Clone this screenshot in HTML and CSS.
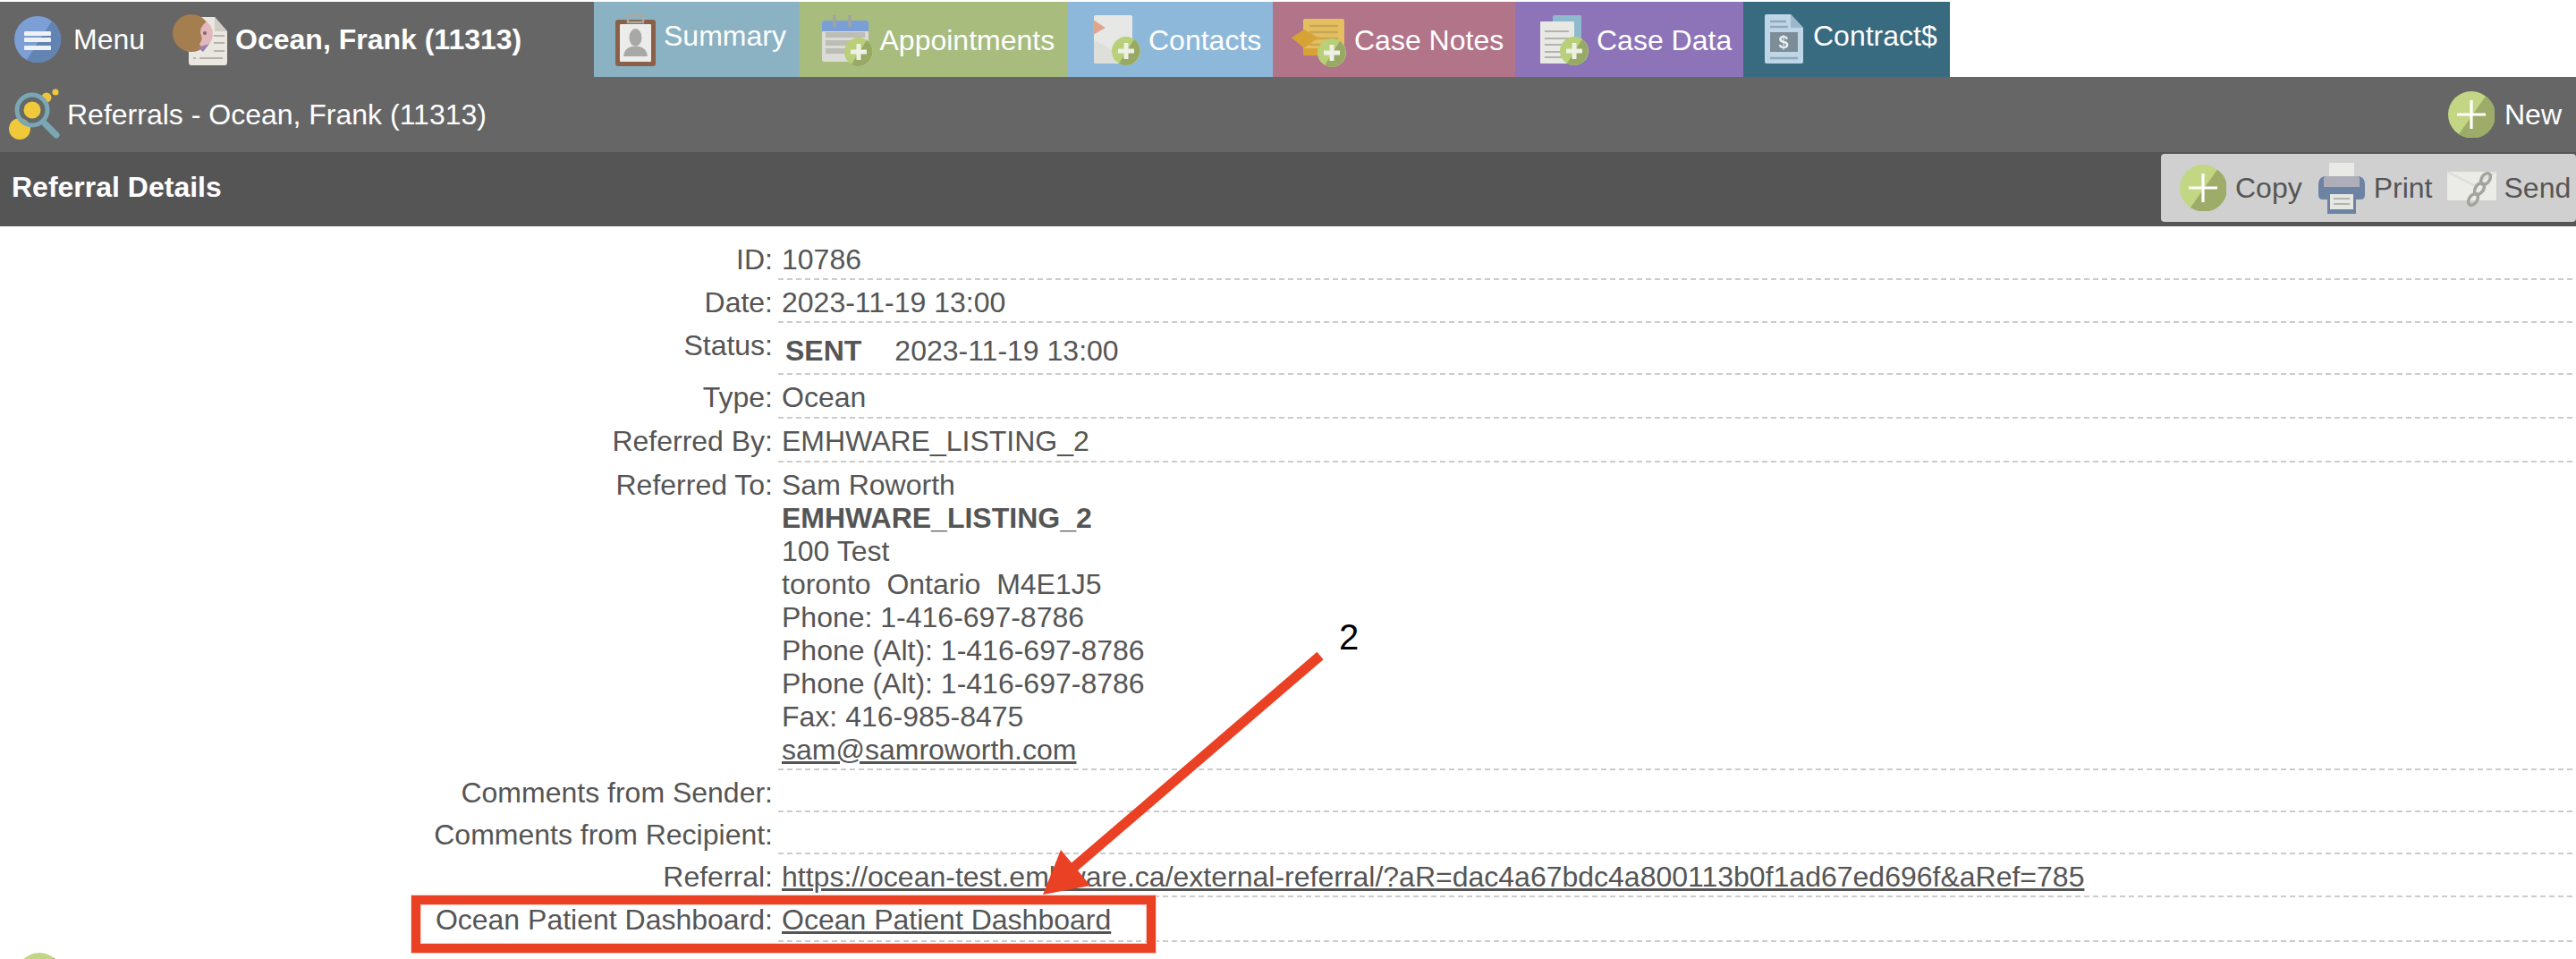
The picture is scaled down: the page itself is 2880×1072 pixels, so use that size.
FILE: index.html
```html
<!DOCTYPE html>
<html lang="en">
<head>
<meta charset="utf-8">
<title>Referrals - Ocean, Frank (11313)</title>
<link rel="stylesheet" href="styles.css">
</head>
<body>
<svg class="defs" width="0" height="0" aria-hidden="true">
  <defs>
    <symbol id="plus" viewBox="0 0 52 52">
      <circle cx="26" cy="26" r="26" fill="#c3d683"/>
      <path d="M42 5.4A26 26 0 0 1 12 48Z" fill="#9dad69"/>
      <path d="M26 10V42M10 26H42" stroke="#fff" stroke-width="3.2" fill="none"/>
    </symbol>
    <symbol id="plus-small" viewBox="0 0 32 32">
      <circle cx="16" cy="16" r="16" fill="#b9cf78"/>
      <path d="M25 3A16 16 0 0 1 8 30Z" fill="#97a965"/>
      <path d="M16 7V25M7 16H25" stroke="#eef0e6" stroke-width="5" fill="none"/>
    </symbol>
  </defs>
</svg>

<header class="topbar">
  <div class="head">
    <svg class="ico ico-menu" viewBox="0 0 52 52">
      <circle cx="26" cy="26" r="26" fill="#7c9fd6"/>
      <path d="M42 5.4A26 26 0 0 1 14 49L26 30Z" fill="#6284b3"/>
      <rect x="11" y="17" width="30" height="5" rx="1" fill="#eef1f6"/>
      <rect x="11" y="24" width="30" height="5" rx="1" fill="#eef1f6"/>
      <rect x="11" y="33" width="30" height="5" rx="1" fill="#eef1f6"/>
    </svg>
    <span class="menu-label">Menu</span>
    <svg class="ico ico-patient" viewBox="0 0 57 57">
      <path d="M14 3H43L57 19V54Q57 57 54 57H17Q14 57 14 54Z" fill="#e9e7e0"/>
      <path d="M43 3L57 19H43Z" fill="#cfcdc6"/>
      <path d="M42 24H54M42 32H54M42 41H54M26 49H52M19 49H22" stroke="#b5b3ab" stroke-width="2"/>
      <circle cx="17" cy="21" r="21" fill="#a47e4f"/>
      <path d="M34 8Q41 14 41 22Q41 31 34 35Q27 38 26 33Q30 28 28 24Q24 16 34 8Z" fill="#e1b8bb"/>
      <path d="M24 37L37 33L30 42Z" fill="#9a7fa8"/>
      <circle cx="32" cy="21" r="2" fill="#84606a"/>
    </svg>
    <span class="patient-name">Ocean, Frank (11313)</span>
  </div>
  <nav class="tabs">
    <a class="tab tab-summary raised">
      <svg class="ico ico-w45" viewBox="0 0 45 58">
        <rect x="0" y="6" width="45" height="52" rx="3" fill="#8a6148"/>
        <rect x="5" y="11" width="35" height="42" rx="1" fill="#ececea"/>
        <path d="M14 4Q14 1 17 1H28Q31 1 31 4V9H14Z" fill="none" stroke="#a9a9a2" stroke-width="2.5"/>
        <ellipse cx="22.500" cy="26" rx="7" ry="10" fill="#a8a8a6"/>
        <path d="M9 47Q10 38 18 36H27Q35 38 36 47Z" fill="#a8a8a6"/>
      </svg>
      <span>Summary</span>
    </a>
    <a class="tab tab-appts">
      <svg class="ico ico-w56" viewBox="0 0 56 60">
        <rect x="0" y="7" width="52" height="46" rx="2" fill="#dcdcd6"/>
        <path d="M0 19V9Q0 7 2 7H50Q52 7 52 9V19Z" fill="#7a9fd6"/>
        <path d="M14 1V14M31 1V14" stroke="#a2a49e" stroke-width="3.500"/>
        <path d="M4 23H48M4 32H48M4 41H48" stroke="#bdbdb7" stroke-width="6"/>
        <use href="#plus-small" x="25" y="26" width="32" height="32"/>
      </svg>
      <span>Appointments</span>
    </a>
    <a class="tab tab-contacts">
      <svg class="ico ico-w53" viewBox="0 0 53 56">
        <rect x="1" y="0" width="43" height="54" rx="2" fill="#e7e7e5"/>
        <path d="M1 28L32 44L25 54H3Q1 54 1 52Z" fill="#dededa"/>
        <path d="M0 5L14 14L0 22Z" fill="#dfa58f"/>
        <use href="#plus-small" x="21" y="24" width="32" height="32"/>
      </svg>
      <span>Contacts</span>
    </a>
    <a class="tab tab-notes">
      <svg class="ico ico-w61" viewBox="0 0 61 54">
        <rect x="13" y="0" width="46" height="41" rx="2" fill="#e4bf60"/>
        <path d="M20 8H52M20 15H52M20 22H52M20 29H38M20 36H36" stroke="#c9a656" stroke-width="2.500"/>
        <path d="M0 21L14 12L30 21L14 33Z" fill="#d7a335"/>
        <path d="M13 33H30V41H13Z" fill="#d7a335"/>
        <use href="#plus-small" x="29" y="22" width="32" height="32"/>
      </svg>
      <span>Case Notes</span>
    </a>
    <a class="tab tab-data">
      <svg class="ico ico-w54" viewBox="0 0 54 56">
        <rect x="14" y="0" width="32" height="44" rx="2" fill="#8fb9cd"/>
        <rect x="0" y="7" width="38" height="47" rx="1" fill="#e8e8e4"/>
        <path d="M5 18H32M5 26H32M5 33H26M5 41H24M5 47H24" stroke="#b4b4ae" stroke-width="2"/>
        <use href="#plus-small" x="22" y="24" width="32" height="32"/>
      </svg>
      <span>Case Data</span>
    </a>
    <a class="tab tab-contract raised">
      <svg class="ico ico-w43" viewBox="0 0 43 56">
        <path d="M2 0H29L43 15V53Q43 55 41 55H2Q0 55 0 53V2Q0 0 2 0Z" fill="#bed6e8"/>
        <path d="M29 0L43 15H29Z" fill="#9db6c9"/>
        <path d="M6 8H24M6 14H26M6 49H37" stroke="#93a8b8" stroke-width="2.500"/>
        <rect x="6" y="20" width="31" height="22" fill="#7c8d97"/>
        <text class="dollar" x="21" y="38">$</text>
      </svg>
      <span>Contract$</span>
    </a>
  </nav>
</header>

<section class="titlebar">
  <div class="title-left">
    <svg class="ico ico-search" viewBox="0 0 56 56">
      <circle cx="12" cy="44" r="12" fill="#f0c93a"/>
      <circle cx="42" cy="9" r="5.500" fill="#eec43c"/>
      <circle cx="52" cy="3" r="3.500" fill="#f0c93a"/>
      <path d="M40 38L53 51" stroke="#7ba7b4" stroke-width="7" stroke-linecap="round"/>
      <circle cx="26" cy="23" r="17" fill="#5e6f70" fill-opacity=".35" stroke="#7ba7b4" stroke-width="5"/>
      <circle cx="26" cy="23" r="9.500" fill="#f0c93a"/>
    </svg>
    <span>Referrals - Ocean, Frank (11313)</span>
  </div>
  <div class="new-btn">
    <svg class="ico ico-round"><use href="#plus"/></svg>
    <span>New</span>
  </div>
</section>

<section class="detailsbar">
  <h1>Referral Details</h1>
  <div class="actions">
    <svg class="ico ico-round"><use href="#plus"/></svg>
    <span class="act-label">Copy</span>
    <svg class="ico ico-print" viewBox="0 0 52 57">
      <path d="M12 0H40V18H12Z" fill="#e9e9e6"/>
      <path d="M0 36V24Q0 15 9 15H43Q52 15 52 24V36Q52 41 47 41H5Q0 41 0 36Z" fill="#6d83a3"/>
      <path d="M9 15H43Q46 15 46 18V27H6V18Q6 15 9 15Z" fill="#aeaeba"/>
      <rect x="10" y="32" width="32" height="25" fill="#6d83a3"/>
      <rect x="13" y="35" width="26" height="17" fill="#e6e6e3"/>
      <path d="M17 40H35M17 46H35" stroke="#b3b3ad" stroke-width="2"/>
    </svg>
    <span class="act-label">Print</span>
    <svg class="ico ico-send" viewBox="0 0 55 43">
      <path d="M0 1H55V33H0Z" fill="#ebebe8"/>
      <path d="M0 1L30 16L55 1" fill="none" stroke="#dcdcd8" stroke-width="2"/>
      <g fill="none" stroke="#a4a49e" stroke-width="3.500">
        <ellipse cx="43" cy="9" rx="4.500" ry="7" transform="rotate(35 43 9)"/>
        <ellipse cx="36" cy="20" rx="4.500" ry="7" transform="rotate(35 36 20)"/>
        <ellipse cx="29" cy="32" rx="4.500" ry="7" transform="rotate(35 29 32)"/>
      </g>
    </svg>
    <span class="act-label">Send</span>
  </div>
</section>

<main class="details">
  <div class="row">
    <div class="label">ID:</div>
    <div class="value">10786</div>
  </div>
  <div class="row">
    <div class="label">Date:</div>
    <div class="value">2023-11-19 13:00</div>
  </div>
  <div class="row">
    <div class="label">Status:</div>
    <div class="value value-status"><strong>SENT</strong><span class="status-date">2023-11-19 13:00</span></div>
  </div>
  <div class="row row-plus">
    <div class="label">Type:</div>
    <div class="value">Ocean</div>
  </div>
  <div class="row row-plus">
    <div class="label">Referred By:</div>
    <div class="value">EMHWARE_LISTING_2</div>
  </div>
  <div class="row">
    <div class="label">Referred To:</div>
    <div class="value">
      Sam Roworth<br>
      <strong>EMHWARE_LISTING_2</strong><br>
      100 Test<br>
      toronto&nbsp; Ontario&nbsp; M4E1J5<br>
      Phone: 1-416-697-8786<br>
      Phone (Alt): 1-416-697-8786<br>
      Phone (Alt): 1-416-697-8786<br>
      Fax: 416-985-8475<br>
      <a href="#">sam@samroworth.com</a>
    </div>
  </div>
  <div class="row row-minus">
    <div class="label">Comments from Sender:</div>
    <div class="value">&nbsp;</div>
  </div>
  <div class="row row-minus">
    <div class="label">Comments from Recipient:</div>
    <div class="value">&nbsp;</div>
  </div>
  <div class="row">
    <div class="label">Referral:</div>
    <div class="value"><a href="#">https://ocean-test.emhware.ca/external-referral/?aR=dac4a67bdc4a800113b0f1ad67ed696f&amp;aRef=785</a></div>
  </div>
  <div class="row row-last">
    <div class="label">Ocean Patient Dashboard:</div>
    <div class="value"><a href="#">Ocean Patient Dashboard</a></div>
  </div>
  <svg class="ico ico-round ico-foot"><use href="#plus"/></svg>
</main>

<div class="annot">
  <svg class="annot-svg" viewBox="0 0 2880 1072">
    <rect x="465" y="1006" width="822" height="54" fill="none" stroke="#f7d3ca" stroke-width="12"/>
    <rect x="465" y="1006" width="822" height="54" fill="none" stroke="#ea4024" stroke-width="10"/>
    <path d="M1476 733L1186 982" stroke="#ea4024" stroke-width="11" fill="none"/>
    <path d="M1166 1000L1186 950L1219 990Z" fill="#ea4024"/>
  </svg>
  <span class="annot-num">2</span>
</div>
</body>
</html>
```
FILE: styles.css
```css
* { box-sizing: border-box; }

html, body {
  margin: 0;
  height: 1072px;
  overflow: hidden;
  background: #fff;
}

body {
  position: relative;
  padding-top: 2px;
  font-family: "Liberation Sans", Arial, sans-serif;
  font-size: 32px;
  color: #555;
}

.defs { position: absolute; }

.ico { display: block; flex: none; filter: blur(.5px); overflow: visible; }
.ico-round { width: 52px; height: 52px; }

/* top bar */
.topbar { display: flex; height: 84px; color: #fff; }

.head {
  width: 664px;
  display: flex;
  align-items: center;
  background: #666;
  padding-left: 16px;
}
.ico-menu { width: 52px; height: 52px; }
.menu-label { margin-left: 14px; }
.ico-patient { width: 57px; height: 57px; margin-left: 35px; margin-top: 1px; }
.patient-name { margin-left: 9px; font-weight: 700; }

.tabs { display: flex; height: 84px; }
.tab {
  display: flex;
  align-items: center;
  gap: 9px;
  padding-top: 3px;
}
.tab.raised span { padding-bottom: 10px; }

.tab-summary  { width: 229.500px; padding-left: 24px; background: #8bb2c2; }
.tab-appts    { width: 299.500px; padding-left: 25px; background: #a8bc7e; }
.tab-contacts { width: 230px; padding-left: 29px; background: #8db8da; }
.tab-notes    { width: 271px; padding-left: 21px; background: #b27489; }
.tab-data     { width: 255px; padding-left: 28px; background: #8d74b8; }
.tab-contract { width: 231px; padding-left: 24px; background: #386a80; }

.ico-w45 { width: 45px; height: 58px; margin-top: -1px; }
.ico-w56 { width: 56px; height: 60px; margin-top: 1px; }
.ico-w53 { width: 53px; height: 56px; margin-top: -1px; }
.ico-w61 { width: 61px; height: 54px; margin-top: 5px; }
.ico-w54 { width: 54px; height: 56px; margin-top: -1px; }
.ico-w43 { width: 43px; height: 56px; margin-top: -3px; }
.tab-contract .ico-w43 { margin-right: 2px; }
.dollar { font-size: 20px; font-weight: 700; fill: #e8eef2; text-anchor: middle; }

/* title bar */
.titlebar {
  display: flex;
  justify-content: space-between;
  align-items: center;
  height: 84px;
  padding: 0 16px 0 10px;
  background: #666;
  color: #fff;
}
.title-left { display: flex; align-items: center; gap: 9px; }
.ico-search { width: 56px; height: 56px; }
.new-btn { display: flex; align-items: center; gap: 11px; }

/* details bar */
.detailsbar {
  display: flex;
  justify-content: space-between;
  align-items: flex-start;
  height: 83px;
  padding-left: 13px;
  background: #555;
}
.detailsbar h1 { margin: 0; padding-top: 21px; font-size: 32px; line-height: 37px; color: #fff; }
.actions {
  display: flex;
  align-items: center;
  width: 464px;
  height: 76px;
  margin-top: 2px;
  padding-left: 21px;
  background: #d0d0d0;
  border-radius: 4px;
}
.actions .act-label { margin-left: 10px; }
.ico-print { width: 52px; height: 57px; margin-left: 18px; }
.ico-send { width: 55px; height: 43px; margin-left: 16px; margin-top: 4px; }
.ico-send + .act-label { margin-left: 9px; }

/* details */
.details { padding-top: 12px; }

.row { display: flex; line-height: 37px; }
.label {
  width: 864px;
  flex: none;
  padding-top: 7px;
  text-align: right;
}
.value {
  flex: 1;
  margin: 0 4px 0 6px;
  padding: 7px 0 2px 4px;
  border-bottom: 2px dashed #ccc;
}
.value-status { padding: 13px 0 6px 8px; }
.status-date { margin-left: 37px; }
.row-plus .value { padding-bottom: 3px; }
.row-minus .value { padding-bottom: 1px; }
.row-last .value { padding-bottom: 4px; }

.value a { color: #555; text-decoration: underline; }

.ico-foot { margin: 12px 0 0 18px; }

/* annotation overlay */
.annot {
  position: absolute;
  inset: 0;
  pointer-events: none;
}
.annot-svg { display: block; width: 2880px; height: 1072px; }
.annot-num {
  position: absolute;
  left: 1497px;
  top: 689px;
  font-size: 40px;
  line-height: 46px;
  color: #000;
}
```
